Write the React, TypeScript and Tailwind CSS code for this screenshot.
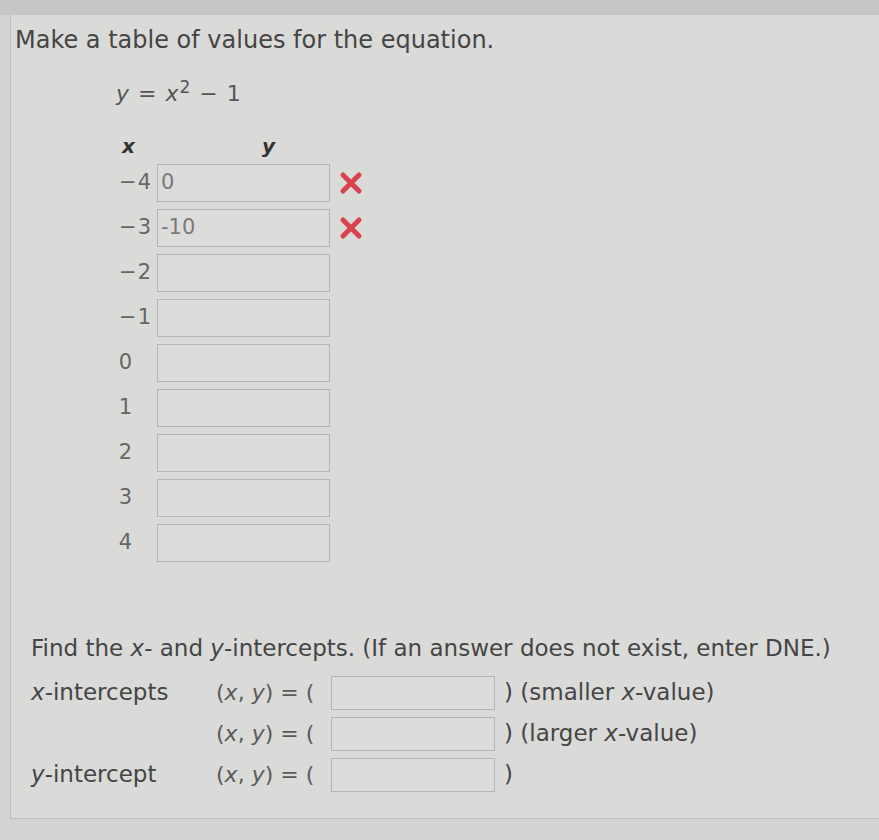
import React from 'react';

const font = { fontFamily: '"DejaVu Sans", Verdana, sans-serif' };

const rows: { x: string; value: string; wrong?: boolean }[] = [
  { x: '-4', value: '0', wrong: true },
  { x: '-3', value: '-10', wrong: true },
  { x: '-2', value: '' },
  { x: '-1', value: '' },
  { x: '0', value: '' },
  { x: '1', value: '' },
  { x: '2', value: '' },
  { x: '3', value: '' },
  { x: '4', value: '' },
];

const WrongMark = () => (
  <svg width="24" height="24" viewBox="0 0 24 24" className="ml-[9px]">
    <path d="M4 4 L20 20 M20 4 L4 20" stroke="#d8434f" strokeWidth="5" strokeLinecap="round" />
  </svg>
);

const Box = ({ value, className }: { value?: string; className: string }) => (
  <div className={`border border-[#b4b4b2] bg-[#dcdcda] flex items-center pl-[3px] text-[21px] text-[#7a7a7a] ${className}`}>
    {value}
  </div>
);

const XValue = ({ x }: { x: string }) =>
  x.startsWith('-') ? (
    <span>
      <span className="mr-[1px]">{'\u2212'}</span>
      {x.slice(1)}
    </span>
  ) : (
    <span className="inline-block w-[23px] text-center mr-[14px]">{x}</span>
  );

const Intercept = ({ label, note }: { label?: React.ReactNode; note: React.ReactNode }) => (
  <div className="flex items-center h-[41px]">
    <div className="w-[185px] text-[23px]">{label}</div>
    <div className="w-[115px] text-[22px] text-[#5a5a5a] whitespace-nowrap">
      (<i>x</i>, <i>y</i>) = (
    </div>
    <Box className="w-[164px] h-[34px]" />
    <div className="ml-[9px] text-[23px] whitespace-nowrap">{note}</div>
  </div>
);

export default function App() {
  return (
    <div style={font} className="w-[879px] h-[840px] bg-[#d3d3d1] overflow-hidden text-[#454545]">
      <div className="h-[15px] bg-[#c6c6c5]" />
      <div className="ml-[10px] h-[804px] border-l border-b border-[#bdbdbb] bg-[#dadad8] pl-[4px]">
        <p className="pt-[11px] text-[24px] leading-[28px]">Make a table of values for the equation.</p>
        <p className="mt-[27px] ml-[101px] text-[22px] leading-[26px] text-[#555] tracking-[1px]">
          <i>y</i> = <i>x</i>
          <sup className="text-[17px]">2</sup> {'\u2212'} 1
        </p>

        <div className="mt-[25px] ml-[90px]">
          <div className="flex h-[28px] items-center text-[20px] font-bold italic text-[#333]">
            <span className="w-[47px] text-center">x</span>
            <span className="ml-[110px]">y</span>
          </div>
          {rows.map((r) => (
            <div key={r.x} className="flex items-center h-[45px]">
              <span className="w-[52px] text-right pr-[6px] text-[21px] text-[#666]">
                <XValue x={r.x} />
              </span>
              <Box value={r.value} className="w-[173px] h-[38px]" />
              {r.wrong && <WrongMark />}
            </div>
          ))}
        </div>

        <div className="mt-[69px] ml-[16px]">
          <p className="text-[23px] leading-[28px] mb-[10px]">
            Find the <i>x</i>- and <i>y</i>-intercepts. (If an answer does not exist, enter DNE.)
          </p>
          <Intercept
            label={<><i>x</i>-intercepts</>}
            note={<>) (smaller <i>x</i>-value)</>}
          />
          <Intercept note={<>) (larger <i>x</i>-value)</>} />
          <Intercept label={<><i>y</i>-intercept</>} note=")" />
        </div>
      </div>
    </div>
  );
}
